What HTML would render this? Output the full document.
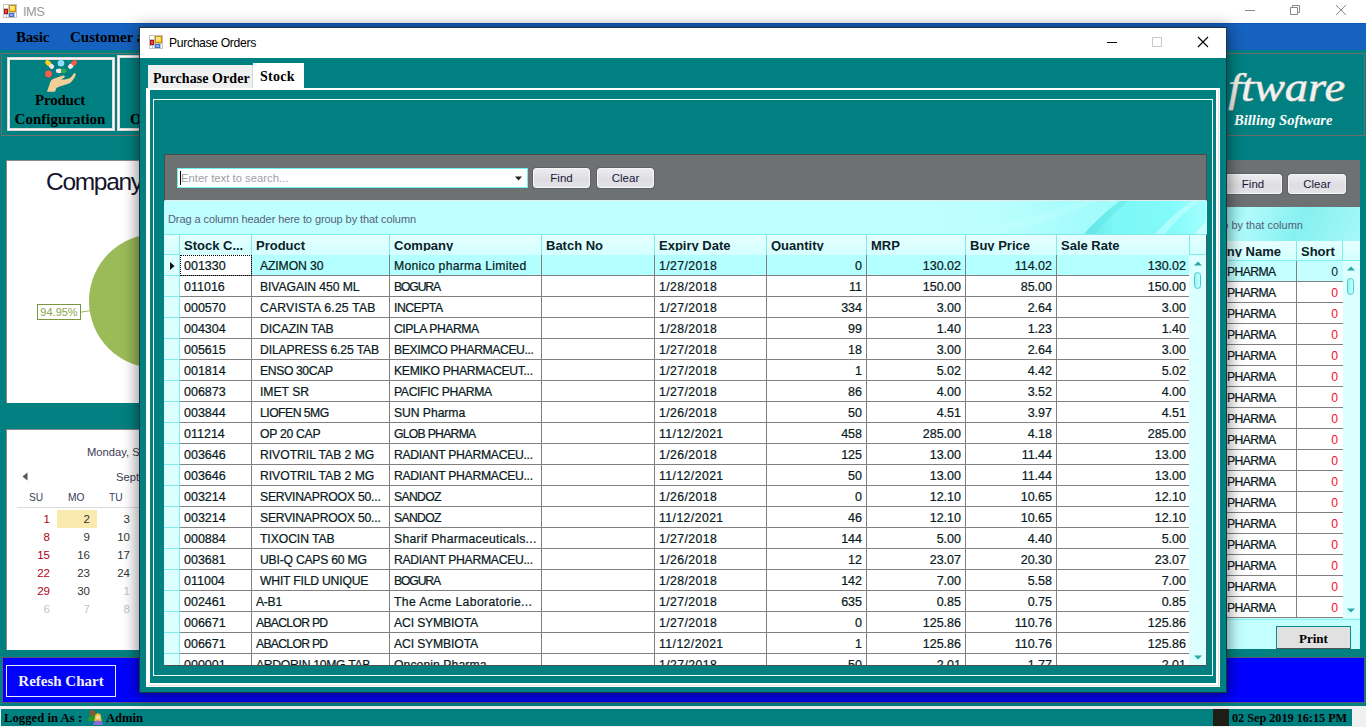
<!DOCTYPE html><html><head><meta charset="utf-8"><title>IMS</title><style>
*{box-sizing:border-box;margin:0;padding:0}
html,body{width:1366px;height:727px;overflow:hidden;background:#fff}
body{position:relative;font-family:"Liberation Sans",sans-serif;font-size:12px;color:#000}
.a{position:absolute}
.t{position:absolute;white-space:pre;line-height:1}
.serif{font-family:"Liberation Serif",serif;font-weight:bold}
/* grid */
.row{position:absolute;left:0;height:21px;width:100%}
.c{position:absolute;top:0;height:21px;line-height:22px;white-space:pre;overflow:hidden;font-size:12.2px;color:#0a1a22;-webkit-text-stroke:0.22px #0a1a22;border-right:1px solid #808080;border-bottom:1px solid #808080;background:#fff;padding:0 4px}
.r{text-align:right}
.sel .c{background:#b4ffff}
.ind{position:absolute;left:0;top:0;width:16px;height:21px;background:#dcffff;border-right:1px solid #7fecec;border-bottom:1px solid #7fecec}
.h{position:absolute;top:0;height:20px;border-right:1px solid #7fecec;background:linear-gradient(#e6ffff,#d4ffff);font-weight:bold;font-size:13px;color:#0a2228;padding-left:4px;white-space:pre;overflow:hidden}
.h span{display:block;height:15px;line-height:19px;overflow:hidden;margin-top:1px}
.btn{position:absolute;border-radius:3px;background:linear-gradient(#ececf0,#dedee2 60%,#e4e4e8);border:1px solid #f6f6f8;box-shadow:0 0 0 1px #5e6262;font-size:11.5px;color:#1a1a3a;text-align:center}
</style></head><body>
<div class="a" style="left:0;top:0;width:1366px;height:23px;background:#fff"></div>
<svg class="a" style="left:3px;top:4px" width="14" height="14" viewBox="0 0 14 14"><rect x="0" y="0" width="14" height="14" fill="#c4c4c4"/><rect x="1" y="1" width="4" height="3" fill="#fff"/><rect x="1" y="11" width="2" height="2" fill="#fff"/><rect x="4" y="11" width="1" height="2" fill="#fff"/><rect x="12" y="9" width="1" height="4" fill="#fff"/><rect x="1" y="5" width="4" height="5" fill="#b01010"/><rect x="2" y="6" width="2" height="3" fill="#e05050"/><rect x="6" y="1" width="7" height="7" fill="#c89000"/><rect x="7" y="2" width="5" height="5" fill="#ffd84a"/><rect x="7" y="2" width="4" height="3" fill="#ffe88a"/><rect x="6" y="9" width="5" height="4" fill="#3a6fd0"/><rect x="7" y="10" width="3" height="2" fill="#8ab0ff"/></svg>
<div class="t" style="left:23px;top:6px;font-size:12.8px;color:#9a9a9a;letter-spacing:-0.5px">IMS</div>
<svg class="a" style="left:1240px;top:0" width="126" height="23" viewBox="0 0 126 23" fill="none" stroke="#8a8a8a" stroke-width="1"><path d="M5 10.5h10"/><path d="M50.5 7.5h7v7h-7z M52.5 7.5v-2h7v7h-2"/><path d="M96 5l10 10M106 5l-10 10"/></svg>
<div class="a" style="left:0;top:23px;width:1366px;height:27px;background:#1662c0;border-top:1px solid #0c59b6"></div>
<div class="t serif" style="left:16px;top:30px;font-size:15px;letter-spacing:-0.2px">Basic</div>
<div class="t serif" style="left:70px;top:30px;font-size:15px">Customer and</div>
<div class="a" style="left:0;top:50px;width:1366px;height:656px;background:#008080"></div>
<div class="a" style="left:1px;top:53px;width:1364px;height:83px;border:1px solid #6e6e6e"></div>
<div class="a" style="left:7px;top:57px;width:108px;height:74px;border:1px solid #ddd6d4;box-shadow:inset 0 0 0 1px #fdfcfc,inset 0 0 0 2px #e2dcda"></div>
<div class="a" style="left:117px;top:55px;width:108px;height:76px;border:1px solid #ddd6d4;box-shadow:inset 0 0 0 1px #fdfcfc,inset 0 0 0 2px #e2dcda"></div>
<svg class="a" style="left:40px;top:58px" width="42" height="36" viewBox="40 58 42 36"><g transform="rotate(45 49.65 64.5)"><rect x="44.25" y="62.2" width="5.8" height="4.6" rx="2.3" fill="#ffcf1a"/><rect x="49.3" y="62.2" width="5.75" height="4.600" rx="2.3" fill="#f1e4e4"/><rect x="47.5" y="62.2" width="2.4" height="4.600" fill="#ffcf1a"/></g><circle cx="61" cy="63.2" r="3.3" fill="#8fe0ff"/><g transform="rotate(-45 72.45 64.5)"><rect x="67.05" y="62.2" width="5.8" height="4.600" rx="2.3" fill="#f1e4e4"/><rect x="72.1" y="62.2" width="5.75" height="4.600" rx="2.3" fill="#ff5a45"/><rect x="72.1" y="62.2" width="2.4" height="4.600" fill="#ff5a45"/></g><rect x="55.8" y="68.8" width="6" height="4.1" rx="2" fill="#f1e4e4"/><rect x="60.8" y="68.8" width="5.7" height="4.1" rx="2" fill="#2fae4e"/><rect x="59" y="68.8" width="2.2" height="4.1" fill="#f1e4e4"/><rect x="61.2" y="68.8" width="2" height="4.1" fill="#2fae4e"/><circle cx="48.5" cy="74" r="3.4" fill="#ff5a45"/><path d="M47 91.8 L55 91.8 L56.4 87.9 C60 86 66 85 70.1 83 C73 80.5 75 77.5 75.8 74.6 C75.6 73.2 74.4 72.8 73.6 73.4 C72.5 75.5 71 77.5 69 78.6 C66 79.5 63 79.6 60.8 79.9 C62.5 78.8 64.2 77.8 64.9 76.8 C64.8 75.6 63.8 75.3 62.8 75.6 C59.5 76.8 56 77.8 53 79.1 C51.2 80 50.2 82 49.8 83.5 Z" fill="#f2cf96"/></svg>
<div class="t serif" style="left:9px;top:93px;width:102px;text-align:center;font-size:15px;letter-spacing:-0.2px">Product</div>
<div class="t serif" style="left:9px;top:112px;width:102px;text-align:center;font-size:15px">Configuration</div>
<div class="t serif" style="left:130px;top:112px;font-size:15px">Order</div>
<div class="t" style="left:1045px;top:68px;width:300px;text-align:right;font-family:'Liberation Serif',serif;font-style:italic;font-size:40px;color:#f4f1ee;-webkit-text-stroke:0.5px #f0ece8;transform:scaleX(1.16);transform-origin:100% 50%;text-shadow:1px 1px 0 rgba(120,120,120,.45)">ftware</div>
<div class="t" style="left:1234px;top:113px;font-family:'Liberation Serif',serif;font-style:italic;font-weight:bold;font-size:14.6px;color:#fbfbfb">Billing Software</div>
<div class="a" style="left:6px;top:160px;width:300px;height:243px;background:#fff;border-top:1px solid #8a8a8a;border-left:1px solid #8a8a8a"></div>
<div class="t" style="left:46px;top:170px;font-size:24.5px;color:#14142e;letter-spacing:-1.3px">Company</div>
<div class="a" style="left:89px;top:234px;width:134px;height:134px;border-radius:50%;background:#9bbb59"></div>
<div class="a" style="left:80px;top:311px;width:10px;height:1px;background:#9bbb59;transform:rotate(-8deg)"></div>
<div class="a" style="left:37px;top:304px;width:44px;height:16px;border:1px solid #7a963e;background:#fff;font-size:11px;line-height:15px;text-align:center;color:#8aa84a">94.95%</div>
<div class="a" style="left:6px;top:429px;width:300px;height:221px;background:#fff;border-top:1px solid #8a8a8a;border-left:1px solid #8a8a8a"></div>
<div class="t" style="left:87px;top:447px;font-size:11.2px;color:#3b3b55">Monday, September 02, 2019</div>
<svg class="a" style="left:22px;top:472px" width="6" height="9"><path d="M5.5 0.5v8L0.5 4.5z" fill="#555"/></svg>
<div class="t" style="left:116px;top:472px;font-size:11.2px;color:#3b3b55">September 2019</div>
<div class="t" style="left:29px;top:493px;font-size:10.2px;color:#3b3b55">SU</div>
<div class="t" style="left:68px;top:493px;font-size:10.2px;color:#3b3b55">MO</div>
<div class="t" style="left:109px;top:493px;font-size:10.2px;color:#3b3b55">TU</div>
<div class="a" style="left:17px;top:507px;width:200px;height:1px;background:#dcdcdc"></div>
<div class="a" style="left:57px;top:510px;width:40px;height:18px;background:#fbeab0"></div>
<div class="t" style="left:20px;top:514px;width:30px;text-align:right;font-size:11.5px;color:#b00018">1</div>
<div class="t" style="left:60px;top:514px;width:30px;text-align:right;font-size:11.5px;color:#333">2</div>
<div class="t" style="left:100px;top:514px;width:30px;text-align:right;font-size:11.5px;color:#333">3</div>
<div class="t" style="left:20px;top:532px;width:30px;text-align:right;font-size:11.5px;color:#b00018">8</div>
<div class="t" style="left:60px;top:532px;width:30px;text-align:right;font-size:11.5px;color:#333">9</div>
<div class="t" style="left:100px;top:532px;width:30px;text-align:right;font-size:11.5px;color:#333">10</div>
<div class="t" style="left:20px;top:550px;width:30px;text-align:right;font-size:11.5px;color:#b00018">15</div>
<div class="t" style="left:60px;top:550px;width:30px;text-align:right;font-size:11.5px;color:#333">16</div>
<div class="t" style="left:100px;top:550px;width:30px;text-align:right;font-size:11.5px;color:#333">17</div>
<div class="t" style="left:20px;top:568px;width:30px;text-align:right;font-size:11.5px;color:#b00018">22</div>
<div class="t" style="left:60px;top:568px;width:30px;text-align:right;font-size:11.5px;color:#333">23</div>
<div class="t" style="left:100px;top:568px;width:30px;text-align:right;font-size:11.5px;color:#333">24</div>
<div class="t" style="left:20px;top:586px;width:30px;text-align:right;font-size:11.5px;color:#b00018">29</div>
<div class="t" style="left:60px;top:586px;width:30px;text-align:right;font-size:11.5px;color:#333">30</div>
<div class="t" style="left:100px;top:586px;width:30px;text-align:right;font-size:11.5px;color:#c4c4c4">1</div>
<div class="t" style="left:20px;top:604px;width:30px;text-align:right;font-size:11.5px;color:#c4c4c4">6</div>
<div class="t" style="left:60px;top:604px;width:30px;text-align:right;font-size:11.5px;color:#c4c4c4">7</div>
<div class="t" style="left:100px;top:604px;width:30px;text-align:right;font-size:11.5px;color:#c4c4c4">8</div>
<div class="a" style="left:1100px;top:160px;width:260px;height:47px;background:#6d7171"></div>
<div class="btn" style="left:1224px;top:174px;width:58px;height:20px;line-height:18px">Find</div>
<div class="btn" style="left:1288px;top:174px;width:58px;height:20px;line-height:18px">Clear</div>
<div class="a" style="left:1100px;top:207px;width:260px;height:34px;background:linear-gradient(115deg,#a8fafa 0%,#8ef4f4 40%,#b0fbfb 55%,#86f0f0 75%,#a6f8f8 100%)"></div>
<div class="t" style="left:1051px;top:220px;font-size:11px;color:#55607a">Drag a column header here to group by that column</div>
<div class="a" style="left:1100px;top:241px;width:260px;height:408px;background:#c4ffff"></div>
<div class="a" style="left:1100px;top:241px;width:260px;height:20px;background:linear-gradient(#e6ffff,#d4ffff);border-bottom:1px solid #7fecec"></div>
<div class="a" style="left:1296px;top:241px;width:1px;height:20px;background:#7fecec"></div>
<div class="a" style="left:1342px;top:241px;width:1px;height:20px;background:#7fecec"></div>
<div class="t" style="left:1100px;top:245px;width:181px;text-align:right;font-size:13px;font-weight:bold;color:#0a2228;height:12px;overflow:hidden">Company Name</div>
<div class="t" style="left:1301px;top:245px;font-size:13px;font-weight:bold;color:#0a2228">Short</div>
<div class="a" style="left:1100px;top:261px;width:243px;height:21px;background:#c4ffff;border-bottom:1px solid #808080"></div>
<div class="t" style="left:1227px;top:266px;font-size:12.2px;color:#0a1a22;letter-spacing:-0.6px;-webkit-text-stroke:0.22px #0a1a22">PHARMA</div>
<div class="t" style="left:1300px;top:266px;width:38px;text-align:right;font-size:12.2px;color:#0a1a22">0</div>
<div class="a" style="left:1100px;top:282px;width:243px;height:21px;background:#fff;border-bottom:1px solid #808080"></div>
<div class="t" style="left:1227px;top:287px;font-size:12.2px;color:#0a1a22;letter-spacing:-0.6px;-webkit-text-stroke:0.22px #0a1a22">PHARMA</div>
<div class="t" style="left:1300px;top:287px;width:38px;text-align:right;font-size:12.2px;color:#f4102c">0</div>
<div class="a" style="left:1100px;top:303px;width:243px;height:21px;background:#fff;border-bottom:1px solid #808080"></div>
<div class="t" style="left:1227px;top:308px;font-size:12.2px;color:#0a1a22;letter-spacing:-0.6px;-webkit-text-stroke:0.22px #0a1a22">PHARMA</div>
<div class="t" style="left:1300px;top:308px;width:38px;text-align:right;font-size:12.2px;color:#f4102c">0</div>
<div class="a" style="left:1100px;top:324px;width:243px;height:21px;background:#fff;border-bottom:1px solid #808080"></div>
<div class="t" style="left:1227px;top:329px;font-size:12.2px;color:#0a1a22;letter-spacing:-0.6px;-webkit-text-stroke:0.22px #0a1a22">PHARMA</div>
<div class="t" style="left:1300px;top:329px;width:38px;text-align:right;font-size:12.2px;color:#f4102c">0</div>
<div class="a" style="left:1100px;top:345px;width:243px;height:21px;background:#fff;border-bottom:1px solid #808080"></div>
<div class="t" style="left:1227px;top:350px;font-size:12.2px;color:#0a1a22;letter-spacing:-0.6px;-webkit-text-stroke:0.22px #0a1a22">PHARMA</div>
<div class="t" style="left:1300px;top:350px;width:38px;text-align:right;font-size:12.2px;color:#f4102c">0</div>
<div class="a" style="left:1100px;top:366px;width:243px;height:21px;background:#fff;border-bottom:1px solid #808080"></div>
<div class="t" style="left:1227px;top:371px;font-size:12.2px;color:#0a1a22;letter-spacing:-0.6px;-webkit-text-stroke:0.22px #0a1a22">PHARMA</div>
<div class="t" style="left:1300px;top:371px;width:38px;text-align:right;font-size:12.2px;color:#f4102c">0</div>
<div class="a" style="left:1100px;top:387px;width:243px;height:21px;background:#fff;border-bottom:1px solid #808080"></div>
<div class="t" style="left:1227px;top:392px;font-size:12.2px;color:#0a1a22;letter-spacing:-0.6px;-webkit-text-stroke:0.22px #0a1a22">PHARMA</div>
<div class="t" style="left:1300px;top:392px;width:38px;text-align:right;font-size:12.2px;color:#f4102c">0</div>
<div class="a" style="left:1100px;top:408px;width:243px;height:21px;background:#fff;border-bottom:1px solid #808080"></div>
<div class="t" style="left:1227px;top:413px;font-size:12.2px;color:#0a1a22;letter-spacing:-0.6px;-webkit-text-stroke:0.22px #0a1a22">PHARMA</div>
<div class="t" style="left:1300px;top:413px;width:38px;text-align:right;font-size:12.2px;color:#f4102c">0</div>
<div class="a" style="left:1100px;top:429px;width:243px;height:21px;background:#fff;border-bottom:1px solid #808080"></div>
<div class="t" style="left:1227px;top:434px;font-size:12.2px;color:#0a1a22;letter-spacing:-0.6px;-webkit-text-stroke:0.22px #0a1a22">PHARMA</div>
<div class="t" style="left:1300px;top:434px;width:38px;text-align:right;font-size:12.2px;color:#f4102c">0</div>
<div class="a" style="left:1100px;top:450px;width:243px;height:21px;background:#fff;border-bottom:1px solid #808080"></div>
<div class="t" style="left:1227px;top:455px;font-size:12.2px;color:#0a1a22;letter-spacing:-0.6px;-webkit-text-stroke:0.22px #0a1a22">PHARMA</div>
<div class="t" style="left:1300px;top:455px;width:38px;text-align:right;font-size:12.2px;color:#f4102c">0</div>
<div class="a" style="left:1100px;top:471px;width:243px;height:21px;background:#fff;border-bottom:1px solid #808080"></div>
<div class="t" style="left:1227px;top:476px;font-size:12.2px;color:#0a1a22;letter-spacing:-0.6px;-webkit-text-stroke:0.22px #0a1a22">PHARMA</div>
<div class="t" style="left:1300px;top:476px;width:38px;text-align:right;font-size:12.2px;color:#f4102c">0</div>
<div class="a" style="left:1100px;top:492px;width:243px;height:21px;background:#fff;border-bottom:1px solid #808080"></div>
<div class="t" style="left:1227px;top:497px;font-size:12.2px;color:#0a1a22;letter-spacing:-0.6px;-webkit-text-stroke:0.22px #0a1a22">PHARMA</div>
<div class="t" style="left:1300px;top:497px;width:38px;text-align:right;font-size:12.2px;color:#f4102c">0</div>
<div class="a" style="left:1100px;top:513px;width:243px;height:21px;background:#fff;border-bottom:1px solid #808080"></div>
<div class="t" style="left:1227px;top:518px;font-size:12.2px;color:#0a1a22;letter-spacing:-0.6px;-webkit-text-stroke:0.22px #0a1a22">PHARMA</div>
<div class="t" style="left:1300px;top:518px;width:38px;text-align:right;font-size:12.2px;color:#f4102c">0</div>
<div class="a" style="left:1100px;top:534px;width:243px;height:21px;background:#fff;border-bottom:1px solid #808080"></div>
<div class="t" style="left:1227px;top:539px;font-size:12.2px;color:#0a1a22;letter-spacing:-0.6px;-webkit-text-stroke:0.22px #0a1a22">PHARMA</div>
<div class="t" style="left:1300px;top:539px;width:38px;text-align:right;font-size:12.2px;color:#f4102c">0</div>
<div class="a" style="left:1100px;top:555px;width:243px;height:21px;background:#fff;border-bottom:1px solid #808080"></div>
<div class="t" style="left:1227px;top:560px;font-size:12.2px;color:#0a1a22;letter-spacing:-0.6px;-webkit-text-stroke:0.22px #0a1a22">PHARMA</div>
<div class="t" style="left:1300px;top:560px;width:38px;text-align:right;font-size:12.2px;color:#f4102c">0</div>
<div class="a" style="left:1100px;top:576px;width:243px;height:21px;background:#fff;border-bottom:1px solid #808080"></div>
<div class="t" style="left:1227px;top:581px;font-size:12.2px;color:#0a1a22;letter-spacing:-0.6px;-webkit-text-stroke:0.22px #0a1a22">PHARMA</div>
<div class="t" style="left:1300px;top:581px;width:38px;text-align:right;font-size:12.2px;color:#f4102c">0</div>
<div class="a" style="left:1100px;top:597px;width:243px;height:21px;background:#fff;border-bottom:1px solid #808080"></div>
<div class="t" style="left:1227px;top:602px;font-size:12.2px;color:#0a1a22;letter-spacing:-0.6px;-webkit-text-stroke:0.22px #0a1a22">PHARMA</div>
<div class="t" style="left:1300px;top:602px;width:38px;text-align:right;font-size:12.2px;color:#f4102c">0</div>
<div class="a" style="left:1296px;top:261px;width:1px;height:357px;background:#808080"></div>
<div class="a" style="left:1100px;top:619px;width:260px;height:1px;background:#86eeee"></div>
<div class="a" style="left:1343px;top:261px;width:17px;height:357px;background:#dcffff"></div>
<svg class="a" style="left:1347px;top:266px" width="8" height="5"><path d="M0 4.5L4 0.5L8 4.5z" fill="#2aa8a8"/></svg>
<div class="a" style="left:1347px;top:278px;width:7px;height:17px;border-radius:4px;border:1px solid #4fcaca;background:linear-gradient(90deg,#8ff6f6,#c8ffff)"></div>
<svg class="a" style="left:1347px;top:608px" width="8" height="5"><path d="M0 0.5L4 4.5L8 0.5z" fill="#2aa8a8"/></svg>
<div class="a serif" style="left:1276px;top:626px;width:75px;height:23px;background:#e1e1e1;border:1px solid #0a8a8a;border-bottom-color:#555;font-size:13px;text-align:center;line-height:23px">Print</div>
<div class="a" style="left:2px;top:657px;width:1363px;height:46px;background:#0000ff;border:1px solid #5a5a6a"></div>
<div class="a serif" style="left:6px;top:665px;width:110px;height:32px;border:1px solid #e8e8ff;color:#f0f0f0;font-size:15px;text-align:center;line-height:30px">Refesh Chart</div>
<div class="a" style="left:0;top:706px;width:1366px;height:21px;background:#f0f0f0"></div>
<div class="a" style="left:1px;top:709px;width:1351px;height:17px;background:#008080"></div>
<div class="t serif" style="left:4px;top:712px;font-size:12.6px;letter-spacing:0.06px">Logged in As :</div>
<svg class="a" style="left:87px;top:709px" width="17" height="17" viewBox="0 0 17 17"><circle cx="5.5" cy="4" r="3" fill="#8a5a2a"/><path d="M0.5 12c0-3 2-5 5-5s5 2 5 5z" fill="#2a9a2a"/><circle cx="11" cy="8" r="3" fill="#f4c890"/><path d="M8 8c0-5 6-5 6 0l0.8 4h-7.6z" fill="#f0c030"/><circle cx="11" cy="8.5" r="2" fill="#f8d8b0"/><path d="M6 16c0-3 2-4.5 5-4.5s5 1.500 5 4.5z" fill="#8a6ad8"/></svg>
<div class="t serif" style="left:106px;top:712px;font-size:12.6px">Admin</div>
<div class="a" style="left:1213px;top:709px;width:16px;height:17px;background:#1e1e16"></div>
<div class="t serif" style="left:1232px;top:712px;font-size:12.2px">02 Sep 2019 16:15 PM</div>
<div class="a" style="left:139px;top:27px;width:1088px;height:666px;background:#008080;border:1px solid #1a3440;box-shadow:0 2px 14px 2px rgba(0,0,0,.45);overflow:hidden">
<div class="a" style="left:0px;top:0px;width:1086px;height:30px;background:#fff"></div>
<svg class="a" style="left:9px;top:7px" width="14" height="14" viewBox="0 0 14 14"><rect x="0" y="0" width="14" height="14" fill="#c4c4c4"/><rect x="1" y="1" width="4" height="3" fill="#fff"/><rect x="1" y="11" width="2" height="2" fill="#fff"/><rect x="4" y="11" width="1" height="2" fill="#fff"/><rect x="12" y="9" width="1" height="4" fill="#fff"/><rect x="1" y="5" width="4" height="5" fill="#b01010"/><rect x="2" y="6" width="2" height="3" fill="#e05050"/><rect x="6" y="1" width="7" height="7" fill="#c89000"/><rect x="7" y="2" width="5" height="5" fill="#ffd84a"/><rect x="7" y="2" width="4" height="3" fill="#ffe88a"/><rect x="6" y="9" width="5" height="4" fill="#3a6fd0"/><rect x="7" y="10" width="3" height="2" fill="#8ab0ff"/></svg>
<div class="t" style="left:29px;top:8.8px;font-size:12.2px;color:#000;letter-spacing:-0.35px">Purchase Orders</div>
<svg class="a" style="left:960px;top:0px" width="120" height="30" viewBox="1100 28 120 30" fill="none"><path d="M1107 42.500h10" stroke="#000"/><path d="M1152.500 37.500h9v9h-9z" stroke="#c8c8c8"/><path d="M1198 37l10 10M1208 37l-10 10" stroke="#000" stroke-width="1.1"/></svg>
<div class="a serif" style="left:8px;top:37px;width:105px;height:24px;background:#f0f0f0;border-right:1px solid #d8d8d8;font-size:14px;line-height:27px;padding-left:5px;letter-spacing:0.07px">Purchase Order</div>
<div class="a serif" style="left:113px;top:35px;width:51px;height:26px;background:#fff;font-size:14px;line-height:28px;padding-left:7px;letter-spacing:0.3px">Stock</div>
<div class="a" style="left:6px;top:60px;width:1074px;height:599px;border:4px solid #fff;border-top-width:2px"></div>
<div class="a" style="left:13px;top:71px;width:1060px;height:577px;border:1px solid #f4ffff"></div>
<div class="a" style="left:1078px;top:62px;width:1px;height:596px;background:#e2e2e2"></div>
<div class="a" style="left:9px;top:657px;width:1070px;height:1px;background:#e2e2e2"></div>
<div class="a" style="left:24px;top:126px;width:1043px;height:47px;background:#6d7171;border:1px solid #4c4e4e;border-bottom:1px solid #dfeeee"></div>
<div class="a" style="left:37px;top:140px;width:351px;height:20px;background:#fff;border:1px solid #6ff0f0"></div>
<div class="a" style="left:40px;top:143px;width:1px;height:14px;background:#000"></div>
<div class="t" style="left:41px;top:145px;font-size:11.3px;color:#a0a0a8">Enter text to search...</div>
<svg class="a" style="left:375px;top:148px" width="7" height="5"><path d="M0 0.500h7L3.500 4.500z" fill="#222"/></svg>
<div class="btn" style="left:393px;top:140px;width:57px;height:20px;line-height:18px">Find</div>
<div class="btn" style="left:457px;top:140px;width:57px;height:20px;line-height:18px">Clear</div>
<div class="a" style="left:24px;top:173px;width:1043px;height:34px;background:#bfffff"></div>
<svg class="a" style="left:757px;top:173px" width="309" height="33" viewBox="0 0 309 33"><defs><linearGradient id="gp1" x1="0" x2="1" y1="0" y2="0"><stop offset="0" stop-color="#9cfafa" stop-opacity="0"/><stop offset="0.3" stop-color="#9cfafa" stop-opacity="0.1"/><stop offset="0.6" stop-color="#9cfafa" stop-opacity=".75"/><stop offset="1" stop-color="#9cfafa" stop-opacity=".9"/></linearGradient><linearGradient id="gp2" x1="0" x2="1" y1="0" y2="0"><stop offset="0" stop-color="#66e8e8"/><stop offset="0.25" stop-color="#7cf6f6"/><stop offset="0.7" stop-color="#82fafa"/><stop offset="1" stop-color="#a4ffff"/></linearGradient></defs><rect width="309" height="33" fill="url(#gp1)"/><path d="M60 33 C110 22 150 12 185 0 L200 0 C170 14 140 24 100 33z" fill="#c6ffff" opacity=".35"/><path d="M187 33 C200 18 212 8 222 0 L309 0 L309 33z" fill="url(#gp2)"/><path d="M188 33 C201 18 213 8 223 0 L232 0 C220 9 208 20 198 33z" fill="#62e4e4" opacity=".45"/><path d="M258 33 C270 20 282 9 296 0 L302 0 C290 9 278 20 268 33z" fill="#d0ffff" opacity=".55"/><path d="M298 33 L309 20 L309 33z" fill="#d4ffff" opacity=".8"/></svg>
<div class="t" style="left:28px;top:186px;font-size:11px;color:#55607a;letter-spacing:-0.08px">Drag a column header here to group by that column</div>
<div class="a" style="left:24px;top:206px;width:1043px;height:432px;background:#dcffff;overflow:hidden;border-top:1px solid #7fecec;border-right:1px solid #4c5a5a;border-bottom:1px solid #4c5050">
<div class="a" style="left:0;top:0;width:1043px;height:20px;background:linear-gradient(#e6ffff,#d4ffff);border-bottom:1px solid #7fecec"></div>
<div class="a" style="left:0;top:0;width:16px;height:19px;border-right:1px solid #7fecec"></div>
<div class="h" style="left:16px;width:72px"><span>Stock C...</span></div>
<div class="h" style="left:88px;width:138px"><span>Product</span></div>
<div class="h" style="left:226px;width:152px"><span>Company</span></div>
<div class="h" style="left:378px;width:113px"><span>Batch No</span></div>
<div class="h" style="left:491px;width:112px"><span>Expiry Date</span></div>
<div class="h" style="left:603px;width:100px"><span>Quantity</span></div>
<div class="h" style="left:703px;width:99px"><span>MRP</span></div>
<div class="h" style="left:802px;width:91px"><span>Buy Price</span></div>
<div class="h" style="left:893px;width:133px"><span>Sale Rate</span></div>
<div class="row sel" style="top:20px">
<div class="ind"></div>
<div class="c" style="left:16px;width:72px;background:#fff;outline:1px dotted #000;outline-offset:-1px;font-size:12.5px">001330</div>
<div class="c" style="left:88px;width:138px;letter-spacing:-0.112px;padding-left:8px">AZIMON 30</div>
<div class="c" style="left:226px;width:152px;letter-spacing:0.275px">Monico pharma Limited</div>
<div class="c" style="left:378px;width:113px"></div>
<div class="c" style="left:491px;width:112px;letter-spacing:0.45px">1/27/2018</div>
<div class="c r" style="left:603px;width:100px;font-size:12.5px">0</div>
<div class="c r" style="left:703px;width:99px;font-size:12.5px">130.02</div>
<div class="c r" style="left:802px;width:91px;font-size:12.5px">114.02</div>
<div class="c r" style="left:893px;width:133px;font-size:12.5px;border-right:none">130.02</div>
</div>
<div class="row" style="top:41px">
<div class="ind"></div>
<div class="c" style="left:16px;width:72px;font-size:12.5px">011016</div>
<div class="c" style="left:88px;width:138px;letter-spacing:-0.086px;padding-left:8px">BIVAGAIN 450 ML</div>
<div class="c" style="left:226px;width:152px;letter-spacing:-1.135px">BOGURA</div>
<div class="c" style="left:378px;width:113px"></div>
<div class="c" style="left:491px;width:112px;letter-spacing:0.45px">1/28/2018</div>
<div class="c r" style="left:603px;width:100px;font-size:12.5px">11</div>
<div class="c r" style="left:703px;width:99px;font-size:12.5px">150.00</div>
<div class="c r" style="left:802px;width:91px;font-size:12.5px">85.00</div>
<div class="c r" style="left:893px;width:133px;font-size:12.5px;border-right:none">150.00</div>
</div>
<div class="row" style="top:62px">
<div class="ind"></div>
<div class="c" style="left:16px;width:72px;font-size:12.5px">000570</div>
<div class="c" style="left:88px;width:138px;letter-spacing:0.198px;padding-left:8px">CARVISTA 6.25 TAB</div>
<div class="c" style="left:226px;width:152px;letter-spacing:-0.478px">INCEPTA</div>
<div class="c" style="left:378px;width:113px"></div>
<div class="c" style="left:491px;width:112px;letter-spacing:0.45px">1/27/2018</div>
<div class="c r" style="left:603px;width:100px;font-size:12.5px">334</div>
<div class="c r" style="left:703px;width:99px;font-size:12.5px">3.00</div>
<div class="c r" style="left:802px;width:91px;font-size:12.5px">2.64</div>
<div class="c r" style="left:893px;width:133px;font-size:12.5px;border-right:none">3.00</div>
</div>
<div class="row" style="top:83px">
<div class="ind"></div>
<div class="c" style="left:16px;width:72px;font-size:12.5px">004304</div>
<div class="c" style="left:88px;width:138px;letter-spacing:-0.119px;padding-left:8px">DICAZIN TAB</div>
<div class="c" style="left:226px;width:152px;letter-spacing:-0.452px">CIPLA PHARMA</div>
<div class="c" style="left:378px;width:113px"></div>
<div class="c" style="left:491px;width:112px;letter-spacing:0.45px">1/28/2018</div>
<div class="c r" style="left:603px;width:100px;font-size:12.5px">99</div>
<div class="c r" style="left:703px;width:99px;font-size:12.5px">1.40</div>
<div class="c r" style="left:802px;width:91px;font-size:12.5px">1.23</div>
<div class="c r" style="left:893px;width:133px;font-size:12.5px;border-right:none">1.40</div>
</div>
<div class="row" style="top:104px">
<div class="ind"></div>
<div class="c" style="left:16px;width:72px;font-size:12.5px">005615</div>
<div class="c" style="left:88px;width:138px;letter-spacing:-0.136px;padding-left:8px">DILAPRESS 6.25 TAB</div>
<div class="c" style="left:226px;width:152px;letter-spacing:-0.409px">BEXIMCO PHARMACEU...</div>
<div class="c" style="left:378px;width:113px"></div>
<div class="c" style="left:491px;width:112px;letter-spacing:0.45px">1/27/2018</div>
<div class="c r" style="left:603px;width:100px;font-size:12.5px">18</div>
<div class="c r" style="left:703px;width:99px;font-size:12.5px">3.00</div>
<div class="c r" style="left:802px;width:91px;font-size:12.5px">2.64</div>
<div class="c r" style="left:893px;width:133px;font-size:12.5px;border-right:none">3.00</div>
</div>
<div class="row" style="top:125px">
<div class="ind"></div>
<div class="c" style="left:16px;width:72px;font-size:12.5px">001814</div>
<div class="c" style="left:88px;width:138px;letter-spacing:-0.391px;padding-left:8px">ENSO 30CAP</div>
<div class="c" style="left:226px;width:152px;letter-spacing:-0.309px">KEMIKO PHARMACEUT...</div>
<div class="c" style="left:378px;width:113px"></div>
<div class="c" style="left:491px;width:112px;letter-spacing:0.45px">1/27/2018</div>
<div class="c r" style="left:603px;width:100px;font-size:12.5px">1</div>
<div class="c r" style="left:703px;width:99px;font-size:12.5px">5.02</div>
<div class="c r" style="left:802px;width:91px;font-size:12.5px">4.42</div>
<div class="c r" style="left:893px;width:133px;font-size:12.5px;border-right:none">5.02</div>
</div>
<div class="row" style="top:146px">
<div class="ind"></div>
<div class="c" style="left:16px;width:72px;font-size:12.5px">006873</div>
<div class="c" style="left:88px;width:138px;letter-spacing:-0.026px;padding-left:8px">IMET SR</div>
<div class="c" style="left:226px;width:152px;letter-spacing:-0.354px">PACIFIC PHARMA</div>
<div class="c" style="left:378px;width:113px"></div>
<div class="c" style="left:491px;width:112px;letter-spacing:0.45px">1/27/2018</div>
<div class="c r" style="left:603px;width:100px;font-size:12.5px">86</div>
<div class="c r" style="left:703px;width:99px;font-size:12.5px">4.00</div>
<div class="c r" style="left:802px;width:91px;font-size:12.5px">3.52</div>
<div class="c r" style="left:893px;width:133px;font-size:12.5px;border-right:none">4.00</div>
</div>
<div class="row" style="top:167px">
<div class="ind"></div>
<div class="c" style="left:16px;width:72px;font-size:12.5px">003844</div>
<div class="c" style="left:88px;width:138px;letter-spacing:-0.51px;padding-left:8px">LIOFEN 5MG</div>
<div class="c" style="left:226px;width:152px;letter-spacing:-0.063px">SUN Pharma</div>
<div class="c" style="left:378px;width:113px"></div>
<div class="c" style="left:491px;width:112px;letter-spacing:0.45px">1/26/2018</div>
<div class="c r" style="left:603px;width:100px;font-size:12.5px">50</div>
<div class="c r" style="left:703px;width:99px;font-size:12.5px">4.51</div>
<div class="c r" style="left:802px;width:91px;font-size:12.5px">3.97</div>
<div class="c r" style="left:893px;width:133px;font-size:12.5px;border-right:none">4.51</div>
</div>
<div class="row" style="top:188px">
<div class="ind"></div>
<div class="c" style="left:16px;width:72px;font-size:12.5px">011214</div>
<div class="c" style="left:88px;width:138px;letter-spacing:-0.28px;padding-left:8px">OP 20 CAP</div>
<div class="c" style="left:226px;width:152px;letter-spacing:-0.719px">GLOB PHARMA</div>
<div class="c" style="left:378px;width:113px"></div>
<div class="c" style="left:491px;width:112px;letter-spacing:0.45px">11/12/2021</div>
<div class="c r" style="left:603px;width:100px;font-size:12.5px">458</div>
<div class="c r" style="left:703px;width:99px;font-size:12.5px">285.00</div>
<div class="c r" style="left:802px;width:91px;font-size:12.5px">4.18</div>
<div class="c r" style="left:893px;width:133px;font-size:12.5px;border-right:none">285.00</div>
</div>
<div class="row" style="top:209px">
<div class="ind"></div>
<div class="c" style="left:16px;width:72px;font-size:12.5px">003646</div>
<div class="c" style="left:88px;width:138px;letter-spacing:-0.038px;padding-left:8px">RIVOTRIL TAB 2 MG</div>
<div class="c" style="left:226px;width:152px;letter-spacing:-0.297px">RADIANT PHARMACEU...</div>
<div class="c" style="left:378px;width:113px"></div>
<div class="c" style="left:491px;width:112px;letter-spacing:0.45px">1/26/2018</div>
<div class="c r" style="left:603px;width:100px;font-size:12.5px">125</div>
<div class="c r" style="left:703px;width:99px;font-size:12.5px">13.00</div>
<div class="c r" style="left:802px;width:91px;font-size:12.5px">11.44</div>
<div class="c r" style="left:893px;width:133px;font-size:12.5px;border-right:none">13.00</div>
</div>
<div class="row" style="top:230px">
<div class="ind"></div>
<div class="c" style="left:16px;width:72px;font-size:12.5px">003646</div>
<div class="c" style="left:88px;width:138px;letter-spacing:-0.038px;padding-left:8px">RIVOTRIL TAB 2 MG</div>
<div class="c" style="left:226px;width:152px;letter-spacing:-0.297px">RADIANT PHARMACEU...</div>
<div class="c" style="left:378px;width:113px"></div>
<div class="c" style="left:491px;width:112px;letter-spacing:0.45px">11/12/2021</div>
<div class="c r" style="left:603px;width:100px;font-size:12.5px">50</div>
<div class="c r" style="left:703px;width:99px;font-size:12.5px">13.00</div>
<div class="c r" style="left:802px;width:91px;font-size:12.5px">11.44</div>
<div class="c r" style="left:893px;width:133px;font-size:12.5px;border-right:none">13.00</div>
</div>
<div class="row" style="top:251px">
<div class="ind"></div>
<div class="c" style="left:16px;width:72px;font-size:12.5px">003214</div>
<div class="c" style="left:88px;width:138px;letter-spacing:-0.214px;padding-left:8px">SERVINAPROOX 50...</div>
<div class="c" style="left:226px;width:152px;letter-spacing:-0.647px">SANDOZ</div>
<div class="c" style="left:378px;width:113px"></div>
<div class="c" style="left:491px;width:112px;letter-spacing:0.45px">1/26/2018</div>
<div class="c r" style="left:603px;width:100px;font-size:12.5px">0</div>
<div class="c r" style="left:703px;width:99px;font-size:12.5px">12.10</div>
<div class="c r" style="left:802px;width:91px;font-size:12.5px">10.65</div>
<div class="c r" style="left:893px;width:133px;font-size:12.5px;border-right:none">12.10</div>
</div>
<div class="row" style="top:272px">
<div class="ind"></div>
<div class="c" style="left:16px;width:72px;font-size:12.5px">003214</div>
<div class="c" style="left:88px;width:138px;letter-spacing:-0.214px;padding-left:8px">SERVINAPROOX 50...</div>
<div class="c" style="left:226px;width:152px;letter-spacing:-0.647px">SANDOZ</div>
<div class="c" style="left:378px;width:113px"></div>
<div class="c" style="left:491px;width:112px;letter-spacing:0.45px">11/12/2021</div>
<div class="c r" style="left:603px;width:100px;font-size:12.5px">46</div>
<div class="c r" style="left:703px;width:99px;font-size:12.5px">12.10</div>
<div class="c r" style="left:802px;width:91px;font-size:12.5px">10.65</div>
<div class="c r" style="left:893px;width:133px;font-size:12.5px;border-right:none">12.10</div>
</div>
<div class="row" style="top:293px">
<div class="ind"></div>
<div class="c" style="left:16px;width:72px;font-size:12.5px">000884</div>
<div class="c" style="left:88px;width:138px;letter-spacing:-0.077px;padding-left:8px">TIXOCIN TAB</div>
<div class="c" style="left:226px;width:152px;letter-spacing:0.283px">Sharif Pharmaceuticals...</div>
<div class="c" style="left:378px;width:113px"></div>
<div class="c" style="left:491px;width:112px;letter-spacing:0.45px">1/27/2018</div>
<div class="c r" style="left:603px;width:100px;font-size:12.5px">144</div>
<div class="c r" style="left:703px;width:99px;font-size:12.5px">5.00</div>
<div class="c r" style="left:802px;width:91px;font-size:12.5px">4.40</div>
<div class="c r" style="left:893px;width:133px;font-size:12.5px;border-right:none">5.00</div>
</div>
<div class="row" style="top:314px">
<div class="ind"></div>
<div class="c" style="left:16px;width:72px;font-size:12.5px">003681</div>
<div class="c" style="left:88px;width:138px;letter-spacing:-0.227px;padding-left:8px">UBI-Q CAPS 60 MG</div>
<div class="c" style="left:226px;width:152px;letter-spacing:-0.297px">RADIANT PHARMACEU...</div>
<div class="c" style="left:378px;width:113px"></div>
<div class="c" style="left:491px;width:112px;letter-spacing:0.45px">1/26/2018</div>
<div class="c r" style="left:603px;width:100px;font-size:12.5px">12</div>
<div class="c r" style="left:703px;width:99px;font-size:12.5px">23.07</div>
<div class="c r" style="left:802px;width:91px;font-size:12.5px">20.30</div>
<div class="c r" style="left:893px;width:133px;font-size:12.5px;border-right:none">23.07</div>
</div>
<div class="row" style="top:335px">
<div class="ind"></div>
<div class="c" style="left:16px;width:72px;font-size:12.5px">011004</div>
<div class="c" style="left:88px;width:138px;letter-spacing:-0.207px;padding-left:8px">WHIT FILD UNIQUE</div>
<div class="c" style="left:226px;width:152px;letter-spacing:-1.135px">BOGURA</div>
<div class="c" style="left:378px;width:113px"></div>
<div class="c" style="left:491px;width:112px;letter-spacing:0.45px">1/28/2018</div>
<div class="c r" style="left:603px;width:100px;font-size:12.5px">142</div>
<div class="c r" style="left:703px;width:99px;font-size:12.5px">7.00</div>
<div class="c r" style="left:802px;width:91px;font-size:12.5px">5.58</div>
<div class="c r" style="left:893px;width:133px;font-size:12.5px;border-right:none">7.00</div>
</div>
<div class="row" style="top:356px">
<div class="ind"></div>
<div class="c" style="left:16px;width:72px;font-size:12.5px">002461</div>
<div class="c" style="left:88px;width:138px;letter-spacing:-0.307px">A-B1</div>
<div class="c" style="left:226px;width:152px;letter-spacing:0.359px">The Acme Laboratorie...</div>
<div class="c" style="left:378px;width:113px"></div>
<div class="c" style="left:491px;width:112px;letter-spacing:0.45px">1/27/2018</div>
<div class="c r" style="left:603px;width:100px;font-size:12.5px">635</div>
<div class="c r" style="left:703px;width:99px;font-size:12.5px">0.85</div>
<div class="c r" style="left:802px;width:91px;font-size:12.5px">0.75</div>
<div class="c r" style="left:893px;width:133px;font-size:12.5px;border-right:none">0.85</div>
</div>
<div class="row" style="top:377px">
<div class="ind"></div>
<div class="c" style="left:16px;width:72px;font-size:12.5px">006671</div>
<div class="c" style="left:88px;width:138px;letter-spacing:-0.716px">ABACLOR PD</div>
<div class="c" style="left:226px;width:152px;letter-spacing:-0.142px">ACI SYMBIOTA</div>
<div class="c" style="left:378px;width:113px"></div>
<div class="c" style="left:491px;width:112px;letter-spacing:0.45px">1/27/2018</div>
<div class="c r" style="left:603px;width:100px;font-size:12.5px">0</div>
<div class="c r" style="left:703px;width:99px;font-size:12.5px">125.86</div>
<div class="c r" style="left:802px;width:91px;font-size:12.5px">110.76</div>
<div class="c r" style="left:893px;width:133px;font-size:12.5px;border-right:none">125.86</div>
</div>
<div class="row" style="top:398px">
<div class="ind"></div>
<div class="c" style="left:16px;width:72px;font-size:12.5px">006671</div>
<div class="c" style="left:88px;width:138px;letter-spacing:-0.716px">ABACLOR PD</div>
<div class="c" style="left:226px;width:152px;letter-spacing:-0.142px">ACI SYMBIOTA</div>
<div class="c" style="left:378px;width:113px"></div>
<div class="c" style="left:491px;width:112px;letter-spacing:0.45px">11/12/2021</div>
<div class="c r" style="left:603px;width:100px;font-size:12.5px">1</div>
<div class="c r" style="left:703px;width:99px;font-size:12.5px">125.86</div>
<div class="c r" style="left:802px;width:91px;font-size:12.5px">110.76</div>
<div class="c r" style="left:893px;width:133px;font-size:12.5px;border-right:none">125.86</div>
</div>
<div class="row" style="top:419px">
<div class="ind"></div>
<div class="c" style="left:16px;width:72px;font-size:12.5px">000001</div>
<div class="c" style="left:88px;width:138px;letter-spacing:-0.291px">ARDORIN 10MG TAB</div>
<div class="c" style="left:226px;width:152px;letter-spacing:0.074px">Onconin Pharma</div>
<div class="c" style="left:378px;width:113px"></div>
<div class="c" style="left:491px;width:112px;letter-spacing:0.45px">1/27/2018</div>
<div class="c r" style="left:603px;width:100px;font-size:12.5px">50</div>
<div class="c r" style="left:703px;width:99px;font-size:12.5px">2.01</div>
<div class="c r" style="left:802px;width:91px;font-size:12.5px">1.77</div>
<div class="c r" style="left:893px;width:133px;font-size:12.5px;border-right:none">2.01</div>
</div>
<svg class="a" style="left:6px;top:27px" width="5" height="8"><path d="M0 0l4.500 4L0 8z" fill="#111"/></svg>
<div class="a" style="left:1025px;top:20px;width:18px;height:412px;background:#dcffff"></div>
<svg class="a" style="left:1030px;top:26px" width="8" height="5"><path d="M0 4.500L4 0.500L8 4.500z" fill="#2aa8a8"/></svg>
<div class="a" style="left:1030px;top:37px;width:7px;height:17px;border-radius:4px;border:1px solid #4fcaca;background:linear-gradient(90deg,#8ff6f6,#c8ffff)"></div>
<svg class="a" style="left:1030px;top:420px" width="8" height="5"><path d="M0 0.500L4 4.500L8 0.500z" fill="#2aa8a8"/></svg>
</div>
</div>
</body></html>
